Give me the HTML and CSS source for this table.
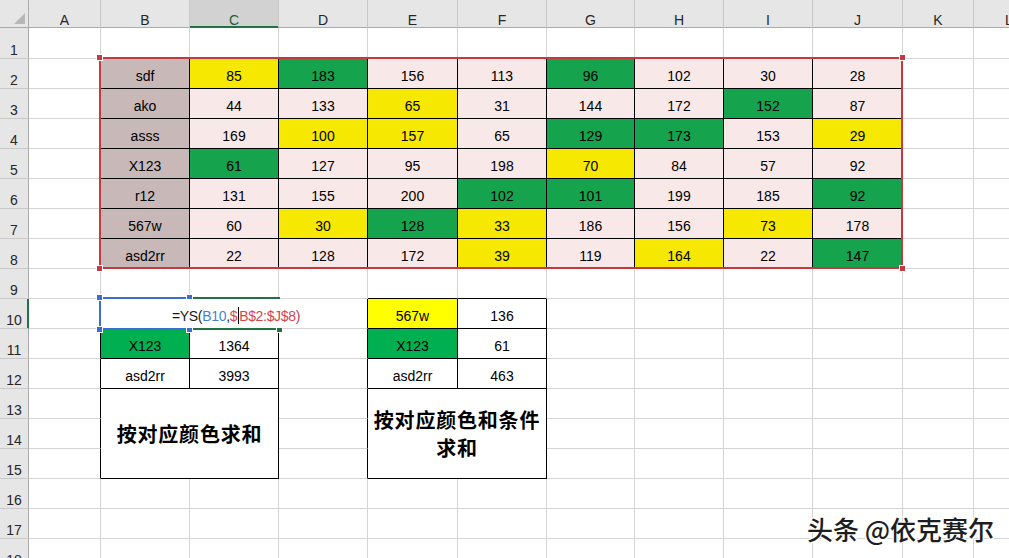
FILE: index.html
```html
<!DOCTYPE html>
<html lang="zh-CN">
<head>
<meta charset="utf-8">
<title>按对应颜色求和</title>
<link rel="stylesheet" href="styles.css">
</head>
<body>
<div class="sheet">
  <div class="grid">
    <!-- header row -->
    <div class="c cor"><i class="tri"></i></div>
    <div class="c h">A</div><div class="c h">B</div><div class="c h sel">C</div><div class="c h">D</div><div class="c h">E</div><div class="c h">F</div><div class="c h">G</div><div class="c h">H</div><div class="c h">I</div><div class="c h">J</div><div class="c h">K</div><div class="c h">L</div>

    <!-- row 1 -->
    <div class="c rh">1</div>
    <div class="c"></div><div class="c"></div><div class="c"></div><div class="c"></div><div class="c"></div><div class="c"></div><div class="c"></div><div class="c"></div><div class="c"></div><div class="c"></div><div class="c"></div><div class="c"></div>

    <!-- row 2 -->
    <div class="c rh">2</div><div class="c"></div>
    <div class="c t n">sdf</div><div class="c t y">85</div><div class="c t g">183</div><div class="c t p">156</div><div class="c t p">113</div><div class="c t g">96</div><div class="c t p">102</div><div class="c t p">30</div><div class="c t p">28</div>
    <div class="c"></div><div class="c"></div>

    <!-- row 3 -->
    <div class="c rh">3</div><div class="c"></div>
    <div class="c t n">ako</div><div class="c t p">44</div><div class="c t p">133</div><div class="c t y">65</div><div class="c t p">31</div><div class="c t p">144</div><div class="c t p">172</div><div class="c t g">152</div><div class="c t p">87</div>
    <div class="c"></div><div class="c"></div>

    <!-- row 4 -->
    <div class="c rh">4</div><div class="c"></div>
    <div class="c t n">asss</div><div class="c t p">169</div><div class="c t y">100</div><div class="c t y">157</div><div class="c t p">65</div><div class="c t g">129</div><div class="c t g">173</div><div class="c t p">153</div><div class="c t y">29</div>
    <div class="c"></div><div class="c"></div>

    <!-- row 5 -->
    <div class="c rh">5</div><div class="c"></div>
    <div class="c t n">X123</div><div class="c t g">61</div><div class="c t p">127</div><div class="c t p">95</div><div class="c t p">198</div><div class="c t y">70</div><div class="c t p">84</div><div class="c t p">57</div><div class="c t p">92</div>
    <div class="c"></div><div class="c"></div>

    <!-- row 6 -->
    <div class="c rh">6</div><div class="c"></div>
    <div class="c t n">r12</div><div class="c t p">131</div><div class="c t p">155</div><div class="c t p">200</div><div class="c t g">102</div><div class="c t g">101</div><div class="c t p">199</div><div class="c t p">185</div><div class="c t g">92</div>
    <div class="c"></div><div class="c"></div>

    <!-- row 7 -->
    <div class="c rh">7</div><div class="c"></div>
    <div class="c t n">567w</div><div class="c t p">60</div><div class="c t y">30</div><div class="c t g">128</div><div class="c t y">33</div><div class="c t p">186</div><div class="c t p">156</div><div class="c t y">73</div><div class="c t p">178</div>
    <div class="c"></div><div class="c"></div>

    <!-- row 8 -->
    <div class="c rh">8</div><div class="c"></div>
    <div class="c t n">asd2rr</div><div class="c t p">22</div><div class="c t p">128</div><div class="c t p">172</div><div class="c t y">39</div><div class="c t p">119</div><div class="c t y">164</div><div class="c t p">22</div><div class="c t g">147</div>
    <div class="c"></div><div class="c"></div>

    <!-- row 9 -->
    <div class="c rh">9</div>
    <div class="c"></div><div class="c"></div><div class="c"></div><div class="c"></div><div class="c bb"></div><div class="c bb"></div><div class="c"></div><div class="c"></div><div class="c"></div><div class="c"></div><div class="c"></div><div class="c"></div>

    <!-- row 10 -->
    <div class="c rh act">10</div>
    <div class="c"></div>
    <div class="c fx span2"><span class="fml">=YS(<span class="ref-b">B10</span>,<span class="ref-r">$<span class="caret"></span>B$2:$J$8</span><span class="par">)</span></span></div>
    <div class="c rb"></div>
    <div class="c t yy">567w</div><div class="c t">136</div>
    <div class="c"></div><div class="c"></div><div class="c"></div><div class="c"></div><div class="c"></div><div class="c"></div>

    <!-- row 11 -->
    <div class="c rh">11</div>
    <div class="c rb"></div>
    <div class="c t gg">X123</div><div class="c t">1364</div>
    <div class="c rb"></div>
    <div class="c t gg">X123</div><div class="c t">61</div>
    <div class="c"></div><div class="c"></div><div class="c"></div><div class="c"></div><div class="c"></div><div class="c"></div>

    <!-- row 12 -->
    <div class="c rh">12</div>
    <div class="c rb"></div>
    <div class="c t">asd2rr</div><div class="c t">3993</div>
    <div class="c rb"></div>
    <div class="c t">asd2rr</div><div class="c t">463</div>
    <div class="c"></div><div class="c"></div><div class="c"></div><div class="c"></div><div class="c"></div><div class="c"></div>

    <!-- row 13 -->
    <div class="c rh">13</div>
    <div class="c rb"></div>
    <div class="c t big merge">按对应颜色求和</div>
    <div class="c rb"></div>
    <div class="c t big merge">按对应颜色和条件求和</div>
    <div class="c"></div><div class="c"></div><div class="c"></div><div class="c"></div><div class="c"></div><div class="c"></div>

    <!-- row 14 -->
    <div class="c rh">14</div>
    <div class="c rb"></div>
    <div class="c rb"></div>
    <div class="c"></div><div class="c"></div><div class="c"></div><div class="c"></div><div class="c"></div><div class="c"></div>

    <!-- row 15 -->
    <div class="c rh">15</div>
    <div class="c rb"></div>
    <div class="c rb"></div>
    <div class="c"></div><div class="c"></div><div class="c"></div><div class="c"></div><div class="c"></div><div class="c"></div>

    <!-- row 16 -->
    <div class="c rh">16</div>
    <div class="c"></div><div class="c"></div><div class="c"></div><div class="c"></div><div class="c"></div><div class="c"></div><div class="c"></div><div class="c"></div><div class="c"></div><div class="c"></div><div class="c"></div><div class="c"></div>

    <!-- row 17 -->
    <div class="c rh">17</div>
    <div class="c"></div><div class="c"></div><div class="c"></div><div class="c"></div><div class="c"></div><div class="c"></div><div class="c"></div><div class="c"></div><div class="c"></div><div class="c"></div><div class="c"></div><div class="c"></div>

    <!-- row 18 -->
    <div class="c rh">18</div>
    <div class="c"></div><div class="c"></div><div class="c"></div><div class="c"></div><div class="c"></div><div class="c"></div><div class="c"></div><div class="c"></div><div class="c"></div><div class="c"></div><div class="c"></div><div class="c"></div>
  </div>

  <!-- overlays: formula range highlights and active cell -->
  <div class="rng rng-red">
    <i class="hd tl"></i><i class="hd tr"></i><i class="hd bl"></i><i class="hd br"></i>
  </div>
  <div class="active-cell"><i class="fill"></i></div>
  <div class="rng rng-blue">
    <i class="hd tl"></i><i class="hd tr"></i><i class="hd bl"></i><i class="hd br"></i>
  </div>

  <div class="wm">头条 @依克赛尔</div>
</div>
</body>
</html>
```

FILE: styles.css
```css
* { box-sizing: border-box; }

html, body {
  margin: 0;
  padding: 0;
  background: #ffffff;
}

.sheet {
  position: relative;
  width: 1009px;
  height: 558px;
  overflow: hidden;
  font-family: "Liberation Sans", "Noto Sans CJK SC", sans-serif;
  color: #000;
}

.grid {
  display: grid;
  grid-template-columns: 29px 72px 89px 89px 89px 90px 89px 88px 89px 89px 90px 71px 71px;
  grid-template-rows: 28px 31px repeat(17, 30px);
  width: 1045px;
}

.c {
  display: flex;
  align-items: flex-end;
  justify-content: center;
  border-right: 1px solid #d4d4d4;
  border-bottom: 1px solid #d4d4d4;
  padding-bottom: 4px;
  font-size: 14px;
  line-height: 16px;
  white-space: nowrap;
  min-width: 0;
}

/* headers */
.cor {
  background: #e6e6e6;
  border-right: 1px solid #ababab;
  border-bottom: 1px solid #ababab;
  justify-content: flex-end;
  padding: 0 3px 3px 0;
}
.tri {
  width: 0;
  height: 0;
  border-left: 11px solid transparent;
  border-bottom: 11px solid #b7b7b7;
}

.h {
  background: #e6e6e6;
  border-right: 1px solid #c9c9c9;
  border-bottom: 1px solid #ababab;
  color: #262626;
  padding-bottom: 0;
  line-height: 14px;
}
.h.sel {
  background: #d2d2d2;
  color: #1e5c3a;
  border-bottom: 1px solid #217346;
  box-shadow: inset 0 -1px 0 #217346;
}

.rh {
  background: #e6e6e6;
  border-right: 1px solid #ababab;
  border-bottom: 1px solid #c9c9c9;
  color: #262626;
  padding-bottom: 1px;
  line-height: 14px;
}
.rh.act {
  box-shadow: inset -1px 0 0 #217346;
  border-right-color: #217346;
}

/* table cells */
.t {
  border-right: 1px solid #000;
  border-bottom: 1px solid #000;
}
.n { background: #c9b8b8; }
.p { background: #f9e8e8; }
.y { background: #f6e800; }
.g { background: #15a34d; }
.yy { background: #ffff00; }
.gg { background: #00b050; }

.rb { border-right: 1px solid #000; }
.bb { border-bottom: 1px solid #000; }

.span2 { grid-column: span 2; }

.merge {
  grid-column: span 2;
  grid-row: span 3;
}

.big {
  align-items: center;
  padding: 0 4px;
  white-space: normal;
  text-align: center;
  font-family: "Noto Sans CJK SC", "Liberation Sans", sans-serif;
  font-weight: bold;
  font-size: 20px;
  line-height: 28px;
  letter-spacing: 0.8px;
}

/* formula being edited: the edit box paints over the cell borders */
.fx {
  align-items: stretch;
  justify-content: flex-start;
  padding: 0 0 0 70px;
  overflow: visible;
  border-bottom: 1px solid #000;
}
.fml {
  display: flex;
  align-items: flex-end;
  padding: 0 2px 4px 1px;
  background: #fff;
  font-size: 14px;
  letter-spacing: -0.33px;
  color: #1a1a1a;
  position: relative;
  z-index: 5;
}
.ref-b { color: #4a7fd0; }
.ref-r { color: #d8464b; }
.par { color: #b0405a; }
.caret {
  display: inline-block;
  width: 1px;
  height: 17px;
  background: #000;
  margin: 0 0.5px -3px;
}

/* range highlight overlays */
.rng {
  position: absolute;
  border: 2px solid;
  pointer-events: none;
}
.rng-red {
  left: 99px;
  top: 57px;
  width: 804px;
  height: 212px;
  border-color: #c53a41;
}
.rng-red .hd { background: #c53a41; }

.rng-blue {
  left: 99px;
  top: 297px;
  width: 91px;
  height: 33px;
  border-color: #3c6fcd;
}
.rng-blue .hd { background: #3c6fcd; }

.hd {
  position: absolute;
  width: 7px;
  height: 7px;
  border: 1px solid #fff;
}
.hd.tl { left: -5px; top: -5px; }
.hd.tr { right: -5px; top: -5px; }
.hd.bl { left: -5px; bottom: -5px; }
.hd.br { right: -5px; bottom: -5px; }

.active-cell {
  position: absolute;
  left: 188px;
  top: 297px;
  width: 92px;
  height: 33px;
  border-top: 2px solid #217346;
  border-bottom: 2px solid #217346;
  border-right: 2px solid #217346;
  pointer-events: none;
}
.fill {
  position: absolute;
  right: -5px;
  bottom: -5px;
  width: 7px;
  height: 7px;
  background: #217346;
  border: 1px solid #fff;
}

/* watermark */
.wm {
  position: absolute;
  left: 807px;
  top: 512px;
  font-family: "Noto Sans CJK SC", sans-serif;
  font-size: 26px;
  font-weight: 500;
  line-height: 34px;
  color: #1e1e1e;
  white-space: nowrap;
  text-shadow: 1px 1px 0 #fff, -1px -1px 0 #fff, 1px -1px 0 #fff, -1px 1px 0 #fff, 0 0 3px #fff;
}
```
